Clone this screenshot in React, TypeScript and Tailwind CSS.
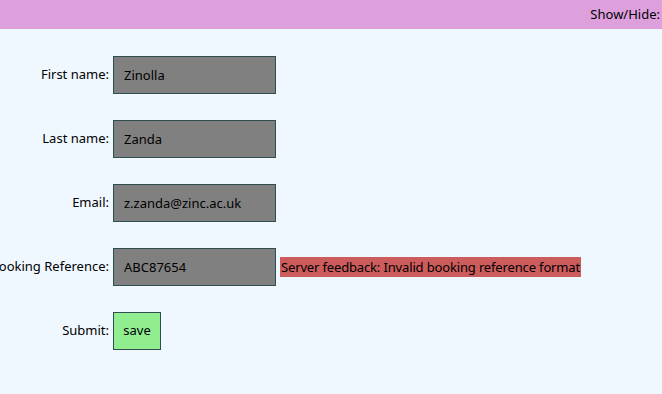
import React, { useState } from 'react';

const FIELDS = [
  { id: 'first', label: 'First name:', value: 'Zinolla' },
  { id: 'last', label: 'Last name:', value: 'Zanda' },
  { id: 'email', label: 'Email:', value: 'z.zanda@zinc.ac.uk' },
  { id: 'ref', label: 'Booking Reference:', value: 'ABC87654', error: 'Server feedback: Invalid booking reference format' },
];

export default function App() {
  const [values, setValues] = useState<Record<string, string>>(
    () => Object.fromEntries(FIELDS.map(f => [f.id, f.value]))
  );

  return (
    <div
      className="min-h-[394px] w-full bg-[#f0f8ff] text-[13px] text-black overflow-hidden"
      style={{ fontFamily: '"Noto Sans", "Open Sans", sans-serif' }}
    >
      {/* top bar */}
      <div className="h-[29px] bg-[#dda0dd] flex items-center justify-end pr-[2px]">
        <span className="whitespace-nowrap">Show/Hide:</span>
      </div>

      {/* form */}
      <div className="flex flex-col gap-[26px] pt-[27px]">
        {FIELDS.map(f => (
          <div key={f.id} className="flex items-center h-[38px]">
            <label className="w-[109px] shrink-0 text-right whitespace-nowrap flex justify-end">
              <span className="whitespace-nowrap">{f.label}</span>
            </label>
            <input
              value={values[f.id]}
              onChange={e => setValues(v => ({ ...v, [f.id]: e.target.value }))}
              className="ml-[4px] w-[163px] h-[38px] shrink-0 bg-[#808080] border border-[#2f4f4f] px-[10px] outline-none text-black"
            />
            {f.error && (
              <span className="ml-[4px] px-[1px] bg-[#cd5c5c] leading-[20px] whitespace-nowrap tracking-[-0.15px]">{f.error}</span>
            )}
          </div>
        ))}
        <div className="flex items-center h-[38px]">
          <label className="w-[109px] shrink-0 text-right">Submit:</label>
          <button className="ml-[4px] w-[48px] h-[38px] bg-[#90ee90] border border-[#2f4f4f]">save</button>
        </div>
      </div>
    </div>
  );
}
